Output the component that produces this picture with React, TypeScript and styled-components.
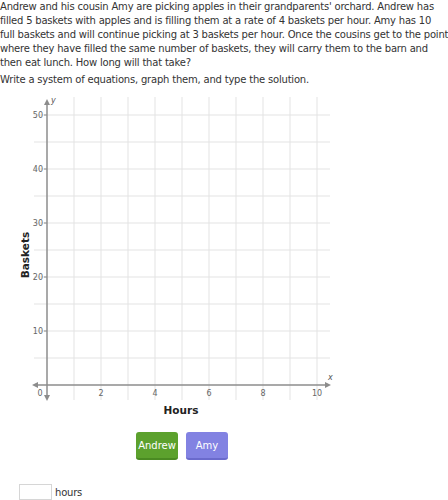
import React, { useState } from 'react';
import styled, { createGlobalStyle } from 'styled-components';

const GlobalStyle = createGlobalStyle`
  body {
    margin: 0;
    background: #fff;
    font-family: 'DejaVu Sans', Verdana, sans-serif;
    color: #333;
  }
`;

const Page = styled.div`
  width: 448px;
  display: flex;
  flex-direction: column;
`;

const Question = styled.p`
  margin: 0;
  font-size: 10px;
  line-height: 14px;
  letter-spacing: -0.2px;
  white-space: nowrap;
`;

const Instruction = styled.p`
  margin: 3px 0 0;
  font-size: 10px;
  line-height: 14px;
  letter-spacing: -0.2px;
`;

const Chart = styled.svg`
  display: block;
  margin-top: 3px;
`;

const Buttons = styled.div`
  display: flex;
  justify-content: center;
  gap: 8px;
  margin-top: 12px;
  padding-right: 84px;
`;

const SeriesButton = styled.button<{ $bg: string; $edge: string }>`
  width: 42px;
  height: 28px;
  padding: 0;
  border: none;
  border-radius: 3px;
  border-bottom: 2px solid ${(p) => p.$edge};
  background: ${(p) => p.$bg};
  color: #fff;
  font-family: 'DejaVu Sans', Verdana, sans-serif;
  font-size: 10px;
  cursor: pointer;
`;

const AnswerRow = styled.div`
  display: flex;
  align-items: center;
  gap: 3px;
  margin-top: 24px;
  padding-left: 19px;
  font-size: 10px;
  letter-spacing: -0.2px;
`;

const AnswerInput = styled.input`
  width: 31px;
  height: 14px;
  padding: 0;
  border: 1px solid #d6d6d6;
  font-size: 10px;
`;

// chart geometry, in px: 27px per hour, 27px per 5 baskets
const TOP = 88;
const X0 = 47;
const Y0 = 383 - TOP;
const UNIT = 27;
const FONT = 'DejaVu Sans, sans-serif';

const steps = Array.from({ length: 10 }, (_, i) => i + 1);

const questionLines = [
  "Andrew and his cousin Amy are picking apples in their grandparents' orchard. Andrew has",
  'filled 5 baskets with apples and is filling them at a rate of 4 baskets per hour. Amy has 10',
  'full baskets and will continue picking at 3 baskets per hour. Once the cousins get to the point',
  'where they have filled the same number of baskets, they will carry them to the barn and',
  'then eat lunch. How long will that take?',
];

const Graph: React.FC = () => (
  <Chart width={448} height={330}>
    {steps.map((i) => (
      <line key={`v${i}`} x1={X0 + i * UNIT} x2={X0 + i * UNIT} y1={7} y2={310} stroke="#e3e3e3" />
    ))}
    {steps.map((i) => (
      <line key={`h${i}`} x1={34} x2={330} y1={Y0 - i * UNIT} y2={Y0 - i * UNIT} stroke="#e3e3e3" />
    ))}

    {/* axes with arrow heads on both ends */}
    <line x1={35} x2={328} y1={Y0} y2={Y0} stroke="#8c8c8c" strokeWidth={1.5} />
    <line x1={X0} x2={X0} y1={12} y2={308} stroke="#8c8c8c" strokeWidth={1.5} />
    <polygon points={`331,${Y0} 325,${Y0 - 3} 325,${Y0 + 3}`} fill="#8c8c8c" />
    <polygon points={`32,${Y0} 38,${Y0 - 3} 38,${Y0 + 3}`} fill="#8c8c8c" />
    <polygon points={`${X0},9 ${X0 - 3},15 ${X0 + 3},15`} fill="#8c8c8c" />
    <polygon points={`${X0},311 ${X0 - 3},305 ${X0 + 3},305`} fill="#8c8c8c" />

    <text x={51} y={13} fontSize={8} fontStyle="italic" fill="#555" fontFamily={FONT}>
      y
    </text>
    <text x={328} y={290} fontSize={8} fontStyle="italic" fill="#555" fontFamily={FONT}>
      x
    </text>

    {[10, 20, 30, 40, 50].map((v) => (
      <g key={`yl${v}`}>
        <line x1={X0 - 3} x2={X0} y1={Y0 - (v / 5) * UNIT} y2={Y0 - (v / 5) * UNIT} stroke="#8c8c8c" />
        <text x={43} y={Y0 - (v / 5) * UNIT + 3} fontSize={8} textAnchor="end" fill="#666" fontFamily={FONT}>
          {v}
        </text>
      </g>
    ))}
    <text x={40} y={Y0 + 11} fontSize={8} textAnchor="middle" fill="#666" fontFamily={FONT}>
      0
    </text>
    {[2, 4, 6, 8, 10].map((v) => (
      <text key={`xl${v}`} x={X0 + v * UNIT} y={Y0 + 11} fontSize={8} textAnchor="middle" fill="#666" fontFamily={FONT}>
        {v}
      </text>
    ))}

    <text x={181} y={324} fontSize={10.5} fontWeight="bold" textAnchor="middle" fill="#222" fontFamily={FONT}>
      Hours
    </text>
    <text
      transform={`translate(29, ${253 - TOP}) rotate(-90)`}
      fontSize={10.5}
      fontWeight="bold"
      textAnchor="middle"
      fill="#222"
      fontFamily={FONT}
    >
      Baskets
    </text>
  </Chart>
);

const App: React.FC = () => {
  const [series, setSeries] = useState<'andrew' | 'amy'>('andrew');
  const [answer, setAnswer] = useState<string>('');

  return (
    <Page>
      <GlobalStyle />
      <Question>
        {questionLines.map((line, i) => (
          <React.Fragment key={i}>
            {line}
            {i < questionLines.length - 1 && <br />}
          </React.Fragment>
        ))}
      </Question>
      <Instruction>Write a system of equations, graph them, and type the solution.</Instruction>
      <Graph />
      <Buttons>
        <SeriesButton
          $bg="#5ca12d"
          $edge={series === 'andrew' ? '#4a8a22' : '#5ca12d'}
          onClick={() => setSeries('andrew')}
        >
          Andrew
        </SeriesButton>
        <SeriesButton
          $bg="#8282e2"
          $edge={series === 'amy' ? '#6464c4' : '#6a6acc'}
          onClick={() => setSeries('amy')}
        >
          Amy
        </SeriesButton>
      </Buttons>
      <AnswerRow>
        <AnswerInput
          value={answer}
          onChange={(e: React.ChangeEvent<HTMLInputElement>) => setAnswer(e.target.value)}
        />
        hours
      </AnswerRow>
    </Page>
  );
};

export default App;
